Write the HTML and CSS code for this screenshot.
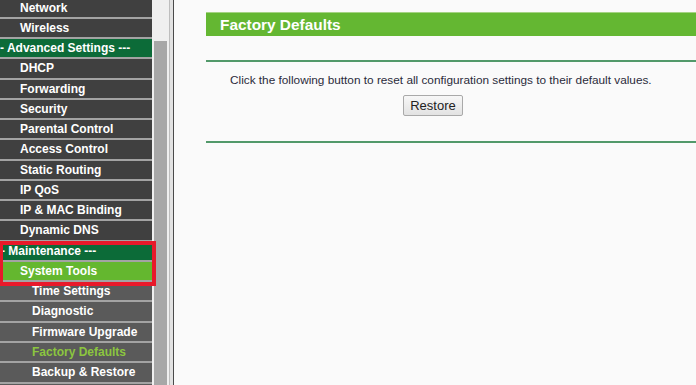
FILE: index.html
```html
<!DOCTYPE html>
<html lang="en">
<head>
    <meta charset="UTF-8">
    <title>Factory Defaults</title>
    <link rel="stylesheet" href="styles.css">
</head>
<body>
    <div class="page">
        <!-- Left menu -->
        <nav class="sidebar">
            <ul class="menu">
                <li><a class="item">Network</a></li>
                <li><a class="item">Wireless</a></li>
                <li><a class="group">- Advanced Settings ---</a></li>
                <li><a class="item">DHCP</a></li>
                <li><a class="item">Forwarding</a></li>
                <li><a class="item">Security</a></li>
                <li><a class="item">Parental Control</a></li>
                <li><a class="item">Access Control</a></li>
                <li><a class="item">Static Routing</a></li>
                <li><a class="item">IP QoS</a></li>
                <li><a class="item">IP &amp; MAC Binding</a></li>
                <li><a class="item">Dynamic DNS</a></li>
                <li class="highlight">
                    <a class="group">- Maintenance ---</a>
                    <a class="item active">System Tools</a>
                </li>
                <li><a class="sub">Time Settings</a></li>
                <li><a class="sub">Diagnostic</a></li>
                <li><a class="sub">Firmware Upgrade</a></li>
                <li><a class="sub current">Factory Defaults</a></li>
                <li><a class="sub">Backup &amp; Restore</a></li>
                <li><a class="sub"></a></li>
            </ul>
        </nav>

        <div class="scrollbar"><div class="thumb"></div></div>
        <div class="frame-edge"></div>

        <!-- Main content -->
        <main class="main">
            <div class="title">Factory Defaults</div>
            <div class="rule"></div>
            <div class="form">
                <p class="desc">Click the following button to reset all configuration settings to their default values.</p>
                <button type="button" class="btn">Restore</button>
            </div>
            <div class="rule bottom"></div>
        </main>
    </div>
</body>
</html>
```

FILE: styles.css
```css
/* General */
html, body {
    margin: 0;
    padding: 0;
    height: 385px;
    overflow: hidden;
}

body {
    font-family: "Liberation Sans", Arial, sans-serif;
    background-color: #fafafa;
    color: #2b2b3b;
}

.page {
    display: flex;
    height: 385px;
}

/* Menu */
.sidebar {
    width: 152px;
    flex-shrink: 0;
    position: relative;
    z-index: 2;
    background-color: #5a5a5a;
}

.menu {
    list-style: none;
    margin: -1.5px 0 0 0;
    padding: 0;
}

.menu a {
    display: block;
    height: 18.28px;
    line-height: 18.28px;
    border-bottom: 2px solid #a3a3a3;
    font-size: 12px;
    font-weight: bold;
    color: #fff;
    white-space: nowrap;
}

.menu .item {
    background-color: #404040;
    padding-left: 20px;
}

.menu .group {
    background-color: #0c6b38;
    padding-left: 0;
}

.menu .sub {
    background-color: #5a5a5a;
    padding-left: 32px;
}

.menu .active {
    background-color: #64b72f;
}

.menu .current {
    color: #8cc63f;
}

.highlight {
    position: relative;
}

.highlight .group {
    padding-left: 1px;
}

.highlight::after {
    content: "";
    position: absolute;
    top: -1px;
    left: 0;
    right: -4px;
    bottom: -4px;
    border: 4px solid #e8192a;
    border-left-width: 3px;
}

/* Scrollbar and frame edge */
.scrollbar {
    width: 17px;
    flex-shrink: 0;
    background-color: #efefef;
    position: relative;
}

.thumb {
    position: absolute;
    top: 41px;
    bottom: 0;
    left: 2px;
    right: 2px;
    background-color: #a7a7a7;
}

.frame-edge {
    width: 5px;
    flex-shrink: 0;
    border-left: 1px solid #bdbdbd;
    border-right: 1.5px solid #4a4a4a;
    background-color: #e2e2e2;
    box-sizing: border-box;
}

/* Content */
.main {
    flex: 1;
    padding: 12px 0 0 32px;
}

.title {
    height: 23px;
    line-height: 23px;
    background-color: #64b732;
    border-top: 1px solid #a5d383;
    color: #fff;
    font-size: 15.4px;
    font-weight: bold;
    padding-left: 14px;
}

.rule {
    margin-top: 24px;
    height: 2px;
    background-color: #52996a;
}

.form {
    padding-left: 24px;
}

.desc {
    margin: 11px 0 0 0;
    font-size: 11.8px;
    line-height: 14px;
}

.btn {
    display: block;
    margin: 8px 0 0 173px;
    width: 60px;
    height: 21px;
    padding: 0;
    font-family: "Liberation Sans", Arial, sans-serif;
    font-size: 13px;
    color: #222;
    background: linear-gradient(#f7f7f7, #e2e2e2);
    border: 1px solid #a9a9a9;
    border-radius: 2px;
}

.rule.bottom {
    margin-top: 25px;
}
```
